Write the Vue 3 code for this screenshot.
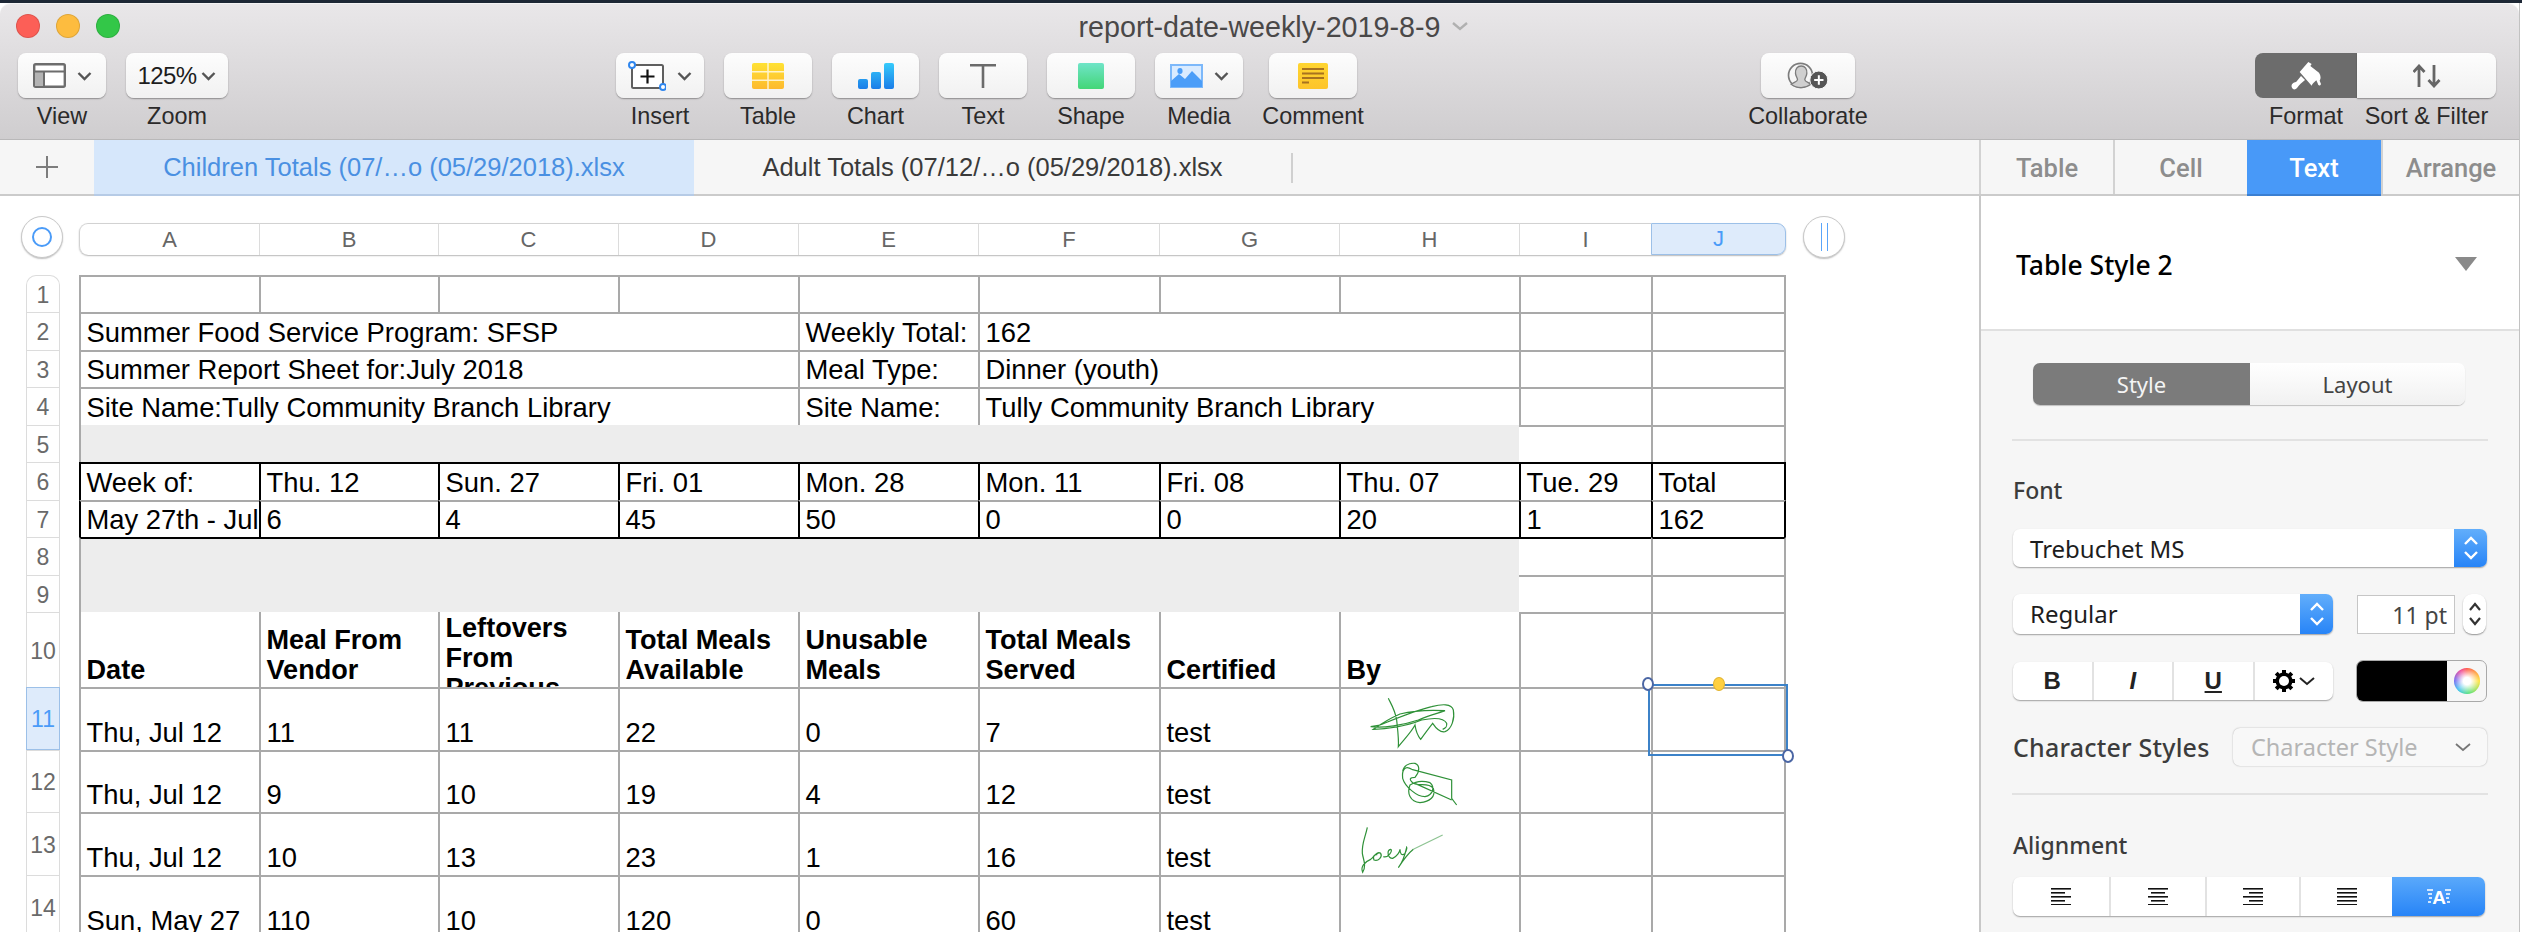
<script setup>
const letters = ['A', 'B', 'C', 'D', 'E', 'F', 'G', 'H', 'I', 'J']
const rowNums = Array.from({ length: 14 }, (_, i) => i + 1)
const cells = []
const add = (r, c, text = '', cls = '', cs = 1, rs = 1) => {
  const extra = c + cs - 1 === 10 ? ' last' : ''
  cells.push({ id: r + '-' + c, r, c, text, cls: cls + extra, cs, rs })
}
for (let c = 1; c <= 10; c++) add(1, c)
const head = [
  ['Summer Food Service Program: SFSP', 'Weekly Total:', '162'],
  ['Summer Report Sheet for:July 2018', 'Meal Type:', 'Dinner (youth)'],
  ['Site Name:Tully Community Branch Library', 'Site Name:', 'Tully Community Branch Library']
]
head.forEach((h, i) => {
  const r = i + 2
  add(r, 1, h[0], '', 4)
  add(r, 5, h[1])
  add(r, 6, h[2], '', 3)
  add(r, 9)
  add(r, 10)
})
add(5, 1, '', 'gray nt', 8)
add(5, 9, '', 'nl')
add(5, 10)
const week = ['Week of:', 'Thu. 12', 'Sun. 27', 'Fri. 01', 'Mon. 28', 'Mon. 11', 'Fri. 08', 'Thu. 07', 'Tue. 29', 'Total']
const weekVals = ['May 27th - Jul', '6', '4', '45', '50', '0', '0', '20', '1', '162']
week.forEach((t, i) => add(6, i + 1, t, 'bt bl' + (i === 9 ? ' br' : '')))
weekVals.forEach((t, i) => add(7, i + 1, t, 'bl' + (i === 9 ? ' br' : '')))
add(8, 1, '', 'gray bt', 8, 2)
add(8, 9, '', 'bt nl')
add(8, 10, '', 'bt')
add(9, 9, '', 'nl')
add(9, 10)
const hdr = ['Date', 'Meal From Vendor', 'Leftovers From Previous', 'Total Meals Available', 'Unusable Meals', 'Total Meals Served', 'Certified', 'By']
hdr.forEach((t, i) => add(10, i + 1, t, 'b nt' + (i === 2 ? ' over' : '')))
add(10, 9)
add(10, 10)
const body = [
  ['Thu, Jul 12', '11', '11', '22', '0', '7', 'test'],
  ['Thu, Jul 12', '9', '10', '19', '4', '12', 'test'],
  ['Thu, Jul 12', '10', '13', '23', '1', '16', 'test'],
  ['Sun, May 27', '110', '10', '120', '0', '60', 'test']
]
body.forEach((row, i) => {
  for (let c = 1; c <= 10; c++) add(11 + i, c, row[c - 1] || '')
})
const alignLines = [
  [[0, 20], [0, 14], [0, 20], [0, 14], [0, 20]],
  [[0, 20], [3, 14], [0, 20], [3, 14], [0, 20]],
  [[0, 20], [6, 14], [0, 20], [6, 14], [0, 20]],
  [[0, 20], [0, 20], [0, 20], [0, 20], [0, 20]]
]
</script>

<template>
  <div class="app">
    <div class="edge"></div>
    <div class="window">
      <header class="chrome">
        <div class="titlerow">
          <div class="lights">
            <span class="light red"></span>
            <span class="light yellow"></span>
            <span class="light green"></span>
          </div>
          <div class="title">
            report-date-weekly-2019-8-9
            <svg class="title-chev" width="18" height="10" viewBox="0 0 18 10"><path d="M2 2l7 6 7-6" fill="none" stroke="#b0b0b0" stroke-width="2.4"/></svg>
          </div>
          <div></div>
        </div>
        <div class="toolbar">
          <div class="tool w88">
            <div class="btn">
              <svg width="33" height="25" viewBox="0 0 33 25"><rect x="1.2" y="1.2" width="30.6" height="22.6" rx="1.5" fill="#fff" stroke="#6d6d6d" stroke-width="2.4"/><rect x="2" y="9" width="9" height="14" fill="#b4b4b4"/><path d="M1 8.5h31M11 8.5v15" stroke="#6d6d6d" stroke-width="2"/></svg>
              <svg class="chev" width="15" height="10" viewBox="0 0 15 10"><path d="M1.5 2l6 6 6-6" fill="none" stroke="#555" stroke-width="2.4"/></svg>
            </div>
            <span class="lbl">View</span>
          </div>
          <div class="tool w102">
            <div class="btn"><span class="zoomval">125%</span><svg class="chev small" width="15" height="10" viewBox="0 0 15 10"><path d="M1.5 2l6 6 6-6" fill="none" stroke="#555" stroke-width="2.4"/></svg></div>
            <span class="lbl">Zoom</span>
          </div>
          <div class="tool w88 m388">
            <div class="btn">
              <svg width="38" height="30" viewBox="0 0 38 30"><rect x="4" y="4" width="31" height="23" rx="1.5" fill="#fff" stroke="#5f5f5f" stroke-width="2"/><path d="M19.5 8.5v14M12.5 15.5h14" stroke="#111" stroke-width="2.2"/><circle cx="4" cy="4" r="3" fill="#fff" stroke="#2f86ee" stroke-width="2"/><circle cx="35" cy="26" r="3" fill="#fff" stroke="#2f86ee" stroke-width="2"/></svg>
              <svg class="chev" width="15" height="10" viewBox="0 0 15 10"><path d="M1.5 2l6 6 6-6" fill="none" stroke="#555" stroke-width="2.4"/></svg>
            </div>
            <span class="lbl">Insert</span>
          </div>
          <div class="tool w88">
            <div class="btn">
              <svg width="32" height="26" viewBox="0 0 32 26">
                <defs><linearGradient id="ty" x1="0" y1="0" x2="0" y2="1"><stop offset="0" stop-color="#ffe234"/><stop offset="1" stop-color="#fdb92e"/></linearGradient></defs>
                <rect width="32" height="26" rx="2" fill="url(#ty)"/><path d="M16 0v26M0 8.7h32M0 17.3h32" stroke="#fff" stroke-opacity=".75" stroke-width="1.5"/>
              </svg>
            </div>
            <span class="lbl">Table</span>
          </div>
          <div class="tool w87">
            <div class="btn">
              <svg width="36" height="26" viewBox="0 0 36 26">
                <defs><linearGradient id="tc" x1="0" y1="0" x2="0" y2="26" gradientUnits="userSpaceOnUse"><stop offset="0" stop-color="#36cbfb"/><stop offset="1" stop-color="#1a7de8"/></linearGradient></defs>
                <rect x="0" y="16" width="10" height="10" rx="2" fill="url(#tc)"/><rect x="13" y="9" width="10" height="17" rx="2" fill="url(#tc)"/><rect x="26" y="0" width="10" height="26" rx="2" fill="url(#tc)"/>
              </svg>
            </div>
            <span class="lbl">Chart</span>
          </div>
          <div class="tool w88">
            <div class="btn">
              <svg width="26" height="24" viewBox="0 0 26 24"><path d="M0 1.2h26M13 1v23" stroke="#6b6b6b" stroke-width="2.6"/></svg>
            </div>
            <span class="lbl">Text</span>
          </div>
          <div class="tool w88">
            <div class="btn">
              <svg width="26" height="26" viewBox="0 0 26 26">
                <defs><linearGradient id="ts" x1="0" y1="0" x2="0" y2="1"><stop offset="0" stop-color="#6fe4c8"/><stop offset="1" stop-color="#43d677"/></linearGradient></defs>
                <rect width="26" height="26" rx="2" fill="url(#ts)"/>
              </svg>
            </div>
            <span class="lbl">Shape</span>
          </div>
          <div class="tool w88">
            <div class="btn">
              <svg width="33" height="24" viewBox="0 0 33 24">
                <rect x="1" y="1" width="31" height="22" fill="#d9ebff" stroke="#7cb8fa" stroke-width="2"/>
                <path d="M1 23V17l8-7 6 5 7-8 10 10v6z" fill="#4a9df8"/><ellipse cx="10" cy="7" rx="2.6" ry="3" fill="#4a9df8"/>
              </svg>
              <svg class="chev" width="15" height="10" viewBox="0 0 15 10"><path d="M1.5 2l6 6 6-6" fill="none" stroke="#555" stroke-width="2.4"/></svg>
            </div>
            <span class="lbl">Media</span>
          </div>
          <div class="tool w88 m26">
            <div class="btn">
              <svg width="30" height="26" viewBox="0 0 30 26">
                <defs><linearGradient id="tn" x1="0" y1="0" x2="0" y2="1"><stop offset="0" stop-color="#ffd530"/><stop offset="1" stop-color="#fdc42b"/></linearGradient></defs>
                <rect width="30" height="26" rx="2" fill="url(#tn)"/><path d="M4 6h22M4 10.500h22M4 15h22M4 19.500h7" stroke="#a8721f" stroke-width="2"/>
              </svg>
            </div>
            <span class="lbl">Comment</span>
          </div>
          <div class="tool w94 m404">
            <div class="btn">
              <svg width="42" height="29" viewBox="55 35 125 87">
                <circle cx="95" cy="78" r="36" fill="#f6f6f6" stroke="#7c7c7c" stroke-width="5"/>
                <path d="M97 50c12 0 18 9 17 22-1 9-6 14-6 19 0 6 12 8 18 14-9 7-18 10-29 10s-21-3-30-10c6-6 19-8 19-14 0-5-5-10-6-19-1-13 5-22 17-22z" fill="#cfcfcf" stroke="#7c7c7c" stroke-width="4"/>
                <circle cx="150" cy="92" r="27" fill="#555" stroke="#f6f6f6" stroke-width="3"/>
                <path d="M150 78v28M136 92h28" stroke="#fff" stroke-width="6"/>
              </svg>
            </div>
            <span class="lbl">Collaborate</span>
          </div>
          <div class="tool m400 w102">
            <div class="btn seg-l on">
              <svg width="35" height="30" viewBox="60 35 105 90">
                <path d="M92 68 118 38l10 6-4 6 26 20c6 10 6 17 2 24l4 10c-3 7-8 6-10-2l-4-9c-7 6-12 11-14 16z" fill="#fff"/>
                <path d="M96 80 82 97c-10 3-16 7-14 16 3 10 12 8 16 3 7-10 14-16 24-24z" fill="#fff"/>
              </svg>
            </div>
            <span class="lbl">Format</span>
          </div>
          <div class="tool w139">
            <div class="btn seg-r">
              <svg width="28" height="24" viewBox="0 0 28 24"><path d="M6 23V2M0.500 8 6 2l5.500 6M21 1v21M15.500 16l5.500 6 5.500-6" fill="none" stroke="#666" stroke-width="2.8"/></svg>
            </div>
            <span class="lbl">Sort &amp; Filter</span>
          </div>
        </div>
      </header>

      <div class="tabstrip">
        <div class="sheets">
          <div class="add"><svg width="24" height="24" viewBox="0 0 24 24"><path d="M12 1v22M1 12h22" stroke="#7d7d7d" stroke-width="2"/></svg></div>
          <div class="sheet-tab active">Children Totals (07/…o (05/29/2018).xlsx</div>
          <div class="sheet-tab">Adult Totals (07/12/…o (05/29/2018).xlsx</div>
          <div class="sheet-sep"></div>
        </div>
        <div class="insp-tabs">
          <div class="itab">Table</div>
          <div class="itab">Cell</div>
          <div class="itab sel">Text</div>
          <div class="itab end">Arrange</div>
        </div>
      </div>

      <div class="main">
        <section class="sheet">
          <div class="colbar">
            <div class="circle-btn"><span class="ring"></span></div>
            <div class="cols">
              <div v-for="l in letters" :key="l" class="col" :class="{ csel: l === 'J' }">{{ l }}</div>
            </div>
            <div class="circle-btn"><span class="bars"></span></div>
          </div>
          <div class="gridrow">
            <div class="rows">
              <div v-for="n in rowNums" :key="n" class="rown" :class="{ rsel: n === 11 }">{{ n }}</div>
            </div>
            <div class="tablewrap">
              <div class="table">
                <div
                  v-for="c in cells"
                  :key="c.id"
                  class="cell"
                  :class="c.cls"
                  :style="{ gridColumn: c.c + ' / span ' + c.cs, gridRow: c.r + ' / span ' + c.rs }"
                ><div class="ct">{{ c.text }}</div></div>
              </div>
              <svg class="sigs" width="130" height="190" viewBox="0 0 390 570" fill="none" stroke="#2f9138" stroke-width="3.6">
                <path d="M115 25C125 45 135 60 140 90C143 120 147 150 145 170C165 145 185 125 195 105C198 125 205 140 212 148C225 130 240 110 248 100C258 115 270 128 285 125C305 118 315 85 310 60C305 40 275 42 245 50C200 60 140 85 90 105L62 110C100 115 160 105 205 90C240 75 270 68 285 62C250 60 190 62 150 72C120 85 95 100 70 118C110 118 170 108 215 90C240 85 280 80 290 100C292 112 285 115 278 118"/>
                <path d="M185 238C165 225 155 240 158 265C165 290 200 320 225 320C250 315 255 290 240 278C215 270 195 275 180 285C170 310 180 335 210 338C240 335 258 320 250 295C235 275 205 290 190 280C175 268 180 262 195 262C210 245 210 225 195 220C175 218 160 228 158 245M185 238L305 270L305 325L320 345M195 280L305 330"/>
                <path d="M52 412C45 445 35 460 37 490C40 510 50 525 38 547C30 530 45 515 62 508C72 500 82 482 92 490C98 500 85 515 72 510C68 500 72 492 82 494M100 500C115 505 130 480 122 478C110 480 112 505 128 505C140 500 150 485 150 478C150 490 155 500 165 490C170 480 172 475 170 472C165 495 155 520 145 533C160 510 175 490 190 478"/>
                <path d="M190 478L278 435" stroke-opacity=".55"/>
              </svg>
              <div class="selection">
                <span class="handle h-tl"></span>
                <span class="handle h-top"></span>
                <span class="handle h-br"></span>
              </div>
            </div>
          </div>
        </section>

        <aside class="inspector">
          <div class="style-head">
            <span class="style-name">Table Style 2</span>
            <span class="tri"></span>
          </div>
          <div class="insp-body">
            <div class="seg2">
              <div class="seg2-a">Style</div>
              <div class="seg2-b">Layout</div>
            </div>
            <div class="divider d1"></div>
            <div class="sect">Font</div>
            <div class="select full">
              <span class="seltext">Trebuchet MS</span>
              <span class="stepper"><svg width="18" height="28" viewBox="0 0 18 28"><path d="M3 10l6-6 6 6M3 18l6 6 6-6" fill="none" stroke="#fff" stroke-width="2.400"/></svg></span>
            </div>
            <div class="r2">
              <div class="select half">
                <span class="seltext">Regular</span>
                <span class="stepper"><svg width="18" height="28" viewBox="0 0 18 28"><path d="M3 10l6-6 6 6M3 18l6 6 6-6" fill="none" stroke="#fff" stroke-width="2.400"/></svg></span>
              </div>
              <div class="ptinput">11 pt</div>
              <div class="ptstep"><svg width="14" height="28" viewBox="0 0 14 28"><path d="M2 10l5-6 5 6M2 18l5 6 5-6" fill="none" stroke="#333" stroke-width="2.200"/></svg></div>
            </div>
            <div class="r3">
              <div class="biu">
                <div class="bb">B</div>
                <div class="bb it">I</div>
                <div class="bb un">U</div>
                <div class="bb gear">
                  <svg width="24" height="24" viewBox="0 0 24 24"><g stroke="#000" stroke-width="4"><path d="M12 1v22M1 12h22M4.200 4.200l15.600 15.600M19.800 4.200 4.200 19.800"/></g><circle cx="12" cy="12" r="8.500" fill="#000"/><circle cx="12" cy="12" r="5" fill="#fff"/></svg>
                  <svg width="16" height="10" viewBox="0 0 16 10"><path d="M1 2l7 6 7-6" fill="none" stroke="#222" stroke-width="2"/></svg>
                </div>
              </div>
              <div class="colorwell">
                <div class="swatch"></div>
                <div class="wheelbox"><span class="wheel"></span></div>
              </div>
            </div>
            <div class="r4">
              <span class="sect inline">Character Styles</span>
              <div class="charsel">
                <span>Character Style</span>
                <svg width="16" height="10" viewBox="0 0 16 10"><path d="M1 2l7 6 7-6" fill="none" stroke="#777" stroke-width="1.800"/></svg>
              </div>
            </div>
            <div class="divider d2"></div>
            <div class="sect s3">Alignment</div>
            <div class="alignbar">
              <div v-for="(lines, i) in alignLines" :key="i" class="ab" :class="'ab' + i">
                <svg width="20" height="17" viewBox="0 0 20 17"><rect v-for="(l, j) in lines" :key="j" :x="l[0]" :y="j * 4" :width="l[1]" height="1.600" fill="#111"/></svg>
              </div>
              <div class="ab abon">
                <svg width="24" height="18" viewBox="0 0 24 18"><path d="M0 2h6M1 6h4M2 10h3M1 14h3M18 2h6M19 6h4M19 10h3M20 14h3" stroke="#fff" stroke-width="1.600"/><text x="12" y="16" text-anchor="middle" font-family="Liberation Sans" font-weight="700" font-size="19" fill="#fff">A</text></svg>
              </div>
            </div>
          </div>
        </aside>
      </div>
    </div>
  </div>
</template>

<style>
html, body { margin: 0; background: #fff; }
</style>

<style scoped>
.app {
  width: 2522px;
  height: 932px;
  overflow: hidden;
  background: #fff;
  font-family: "Liberation Sans", Arial, sans-serif;
  display: flex;
  flex-direction: column;
}
.edge { height: 3px; background: #1d2735; flex: none; }
.window {
  width: 2520px;
  flex: 1;
  min-height: 0;
  display: flex;
  flex-direction: column;
  border-right: 1px solid #c2c2c2;
  box-sizing: border-box;
}
.chrome {
  height: 137px;
  flex: none;
  box-sizing: border-box;
  border-radius: 11px 11px 0 0;
  border-top: 1px solid #f4f3f4;
  border-bottom: 1px solid #b9b8b9;
  background: linear-gradient(#e9e7e9, #cfcdcf);
}
.titlerow {
  height: 49px;
  display: grid;
  grid-template-columns: 1fr auto 1fr;
  align-items: center;
}
.lights { display: flex; gap: 16px; padding-left: 16px; margin-top: -6px; }
.light { width: 24px; height: 24px; border-radius: 50%; box-sizing: border-box; border: 1px solid rgba(0,0,0,.12); }
.red { background: #fc5f57; }
.yellow { background: #fdbc3f; }
.green { background: #33c748; }
.title {
  position: relative;
  font-size: 28.700px;
  line-height: 34px;
  color: #4a4848;
  margin-top: -3px;
  white-space: nowrap;
}
.title-chev { position: absolute; left: calc(100% + 11px); top: 11px; }
.toolbar {
  display: flex;
  align-items: flex-start;
  gap: 20px;
  padding-left: 18px;
}
.tool { display: flex; flex-direction: column; align-items: center; flex: none; }
.w87 { width: 87px; }
.w88 { width: 88px; }
.w94 { width: 94px; }
.w102 { width: 102px; }
.w139 { width: 139px; margin-left: -20px; }
.m388 { margin-left: 368px; }
.m26 { margin-left: 6px; }
.m404 { margin-left: 384px; }
.m400 { margin-left: 380px; }
.btn {
  width: 100%;
  height: 45px;
  box-sizing: border-box;
  border-radius: 8px;
  background: linear-gradient(#fdfdfd, #f1f1f1);
  box-shadow: 0 1px 1.500px rgba(0,0,0,.35);
  display: flex;
  align-items: center;
  justify-content: center;
}
.chev { margin-left: 11px; }
.chev.small { margin-left: 5px; }
.zoomval { font-size: 24px; letter-spacing: -0.6px; color: #1d1d1d; padding-top: 1px; }
.seg-l { border-radius: 8px 0 0 8px; }
.seg-r { border-radius: 0 8px 8px 0; }
.on { background: #6c6c6c; box-shadow: none; }
.lbl {
  margin-top: 3px;
  font-size: 23.400px;
  line-height: 30px;
  color: #2b2a2a;
  white-space: nowrap;
}

.tabstrip {
  height: 56px;
  flex: none;
  display: flex;
  box-sizing: border-box;
  background: #f6f6f6;
  border-bottom: 2px solid #cbcbcb;
}
.sheets { width: 1979px; flex: none; display: flex; align-items: stretch; }
.add { width: 94px; display: flex; align-items: center; justify-content: center; }
.sheet-tab {
  width: 600px;
  display: flex;
  align-items: center;
  justify-content: center;
  font-size: 25.500px;
  color: #3a3a3a;
  white-space: nowrap;
  box-sizing: border-box;
}
.sheet-tab.active {
  background: #d6e7fb;
  color: #4a90e2;
  height: 56px;
  border-bottom: 2px solid #b6cbe6;
}
.sheet-tab + .sheet-tab { width: 597px; }
.sheet-sep { width: 2px; height: 30px; background: #d0d0d0; margin-top: 13px; }
.insp-tabs { flex: 1; display: flex; }
.itab {
  width: 134px;
  box-sizing: border-box;
  border-left: 2px solid #d2d2d2;
  padding-top: 2px;
  display: flex;
  align-items: center;
  justify-content: center;
  font-family: Roboto, "Liberation Sans", sans-serif;
  font-weight: 500;
  font-size: 25.500px;
  color: #8d8d8d;
}
.itab.end { width: auto; flex: 1; }
.itab.sel {
  background: #4899f8;
  color: #fff;
  height: 56px;
  border-left: 0;
  border-bottom: 2px solid #3a7fd2;
}

.main { flex: 1; min-height: 0; display: flex; overflow: hidden; }
.sheet { width: 1979px; flex: none; box-sizing: border-box; padding-top: 20px; overflow: hidden; background: #fff; }
.colbar { display: flex; align-items: flex-start; height: 42px; padding-left: 21px; }
.circle-btn {
  width: 42px;
  height: 42px;
  box-sizing: border-box;
  border-radius: 50%;
  border: 1px solid #c9c9c9;
  box-shadow: 0 1px 1.500px rgba(0,0,0,.25);
  background: #fff;
  display: flex;
  align-items: center;
  justify-content: center;
  flex: none;
}
.ring { width: 20px; height: 20px; box-sizing: border-box; border-radius: 50%; border: 2px solid #4a9bf8; }
.bars { width: 7px; height: 28px; box-sizing: border-box; border-left: 1.500px solid #5aa5f9; border-right: 1.500px solid #5aa5f9; }
.cols {
  margin: 7px 17px 0 16px;
  height: 32px;
  display: grid;
  grid-template-columns: 180px 179px 180px 180px 180px 181px 180px 180px 132px 135px;
  box-sizing: border-box;
  border-radius: 9px;
  box-shadow: 0 1px 1.500px rgba(0,0,0,.28);
  background: #fff;
  flex: none;
}
.col {
  box-sizing: border-box;
  border-left: 1px solid #dcdcdc;
  border-top: 1px solid #d2d2d2;
  display: flex;
  align-items: center;
  justify-content: center;
  font-size: 22px;
  color: #666;
}
.col:first-child { border-left: 1px solid #d2d2d2; border-radius: 9px 0 0 9px; }
.csel {
  background: #deebfb;
  color: #4a9bf8;
  border: 1px solid #9cc0e8;
  border-radius: 0 9px 9px 0;
}
.gridrow { display: flex; margin-top: 17px; padding-left: 26px; align-items: flex-start; }
.rows {
  width: 34px;
  flex: none;
  display: grid;
  grid-template-rows: 37px 38px 37px 38px 37px 38px 37px 38px 37px 75px 63px 62px 63px 63px;
  margin-right: 19px;
}
.rown {
  box-sizing: border-box;
  border: 1px solid #dcdcdc;
  border-bottom: 0;
  padding-top: 2px;
  display: flex;
  align-items: center;
  justify-content: center;
  font-size: 23px;
  color: #6a6a6a;
}
.rown:first-child { border-radius: 10px 10px 0 0; }
.rsel { background: #deebfb; color: #4a9bf8; border-color: #9cc0e8; border-bottom: 1px solid #9cc0e8; }
.tablewrap { position: relative; flex: none; }
.table {
  display: grid;
  grid-template-columns: 180px 179px 180px 180px 180px 181px 180px 180px 132px 135px;
  grid-template-rows: 37px 38px 37px 38px 37px 38px 37px 38px 37px 75px 63px 62px 63px 63px;
}
.cell {
  box-sizing: border-box;
  border-left: 2px solid #a9a9a9;
  border-top: 2px solid #a9a9a9;
  padding: 0 2px 2px 5.500px;
  display: flex;
  align-items: flex-end;
  overflow: hidden;
  font-size: 27.400px;
  line-height: 30px;
  color: #000;
  white-space: nowrap;
  min-width: 0;
}
.ct { min-width: 0; }
.cell.last { border-right: 2px solid #a9a9a9; padding-right: 0; }
.gray { background: #ededed; }
.nt { border-top: 0; }
.nl { border-left: 0; }
.bt { border-top-color: #000; }
.bl { border-left-color: #000; }
.cell.br { border-right-color: #000; }
.b { font-weight: 700; font-size: 27.100px; white-space: normal; }
.over { align-items: flex-start; }
.over .ct { margin-top: 1px; }
.sigs { position: absolute; left: 1271px; top: 415px; pointer-events: none; }
.selection {
  position: absolute;
  left: 1569px;
  top: 409px;
  width: 140px;
  height: 72px;
  box-sizing: border-box;
  border: 2px solid #3c82c8;
}
.handle {
  position: absolute;
  width: 12px;
  height: 14px;
  box-sizing: border-box;
  border-radius: 50%;
  background: #fff;
  border: 2px solid #4b66a4;
}
.h-tl { left: -8px; top: -9px; }
.h-top { left: 63px; top: -9px; background: #ffd040; border: 1px solid #e2b430; }
.h-br { right: -8px; bottom: -9px; }

.inspector {
  flex: 1;
  min-width: 0;
  box-sizing: border-box;
  border-left: 2px solid #c8c8c8;
  display: flex;
  flex-direction: column;
  font-family: "Noto Sans", sans-serif;
}
.style-head {
  height: 135px;
  flex: none;
  box-sizing: border-box;
  border-bottom: 2px solid #e0e0e0;
  background: #fff;
  padding: 50px 42px 0 35px;
  display: flex;
  justify-content: space-between;
  align-items: flex-start;
}
.style-name { font-size: 26.500px; font-weight: 500; color: #000; line-height: 38px; }
.tri {
  width: 0;
  height: 0;
  margin-top: 11px;
  border-left: 11px solid transparent;
  border-right: 11px solid transparent;
  border-top: 14px solid #8a8a8a;
}
.insp-body { flex: 1; background: #f6f6f6; padding: 32px 32px 0 32px; }
.seg2 {
  display: flex;
  width: 432px;
  height: 42px;
  margin-left: 20px;
  font-size: 22px;
  border-radius: 7px;
  box-shadow: 0 1px 1px rgba(0,0,0,.22);
}
.seg2-a {
  width: 217px;
  background: #7b7b7b;
  color: #f4f4f4;
  border-radius: 7px 0 0 7px;
  display: flex;
  align-items: center;
  justify-content: center;
}
.seg2-b {
  flex: 1;
  background: linear-gradient(#fff, #f1f1f1);
  color: #444;
  border-radius: 0 7px 7px 0;
  display: flex;
  align-items: center;
  justify-content: center;
}
.divider { height: 2px; background: #e2e2e2; margin-left: -1px; margin-right: -1px; }
.d1 { margin-top: 34px; }
.d2 { margin-top: 27px; }
.sect { font-size: 23px; font-weight: 500; color: #3c3c3c; line-height: 30px; margin-top: 34px; }
.sect.inline { margin: 0; font-size: 25px; font-weight: 500; letter-spacing: 0.2px; white-space: nowrap; }
.s3 { margin-top: 35px; }
.select {
  height: 38px;
  display: flex;
  align-items: stretch;
  justify-content: space-between;
  background: #fff;
  border-radius: 7px;
  box-shadow: 0 1px 1.500px rgba(0,0,0,.35);
  overflow: hidden;
  flex: none;
}
.full { margin-top: 24px; width: 474px; }
.half { width: 320px; height: 40px; }
.seltext { padding-left: 17px; font-size: 24px; line-height: 39px; color: #1d1d1d; }
.stepper {
  width: 33px;
  background: linear-gradient(#62aefb, #2784f7);
  display: flex;
  align-items: center;
  justify-content: center;
}
.r2 { margin-top: 27px; height: 40px; display: flex; align-items: center; }
.ptinput {
  width: 98px;
  height: 39px;
  margin-left: 24px;
  box-sizing: border-box;
  background: #fff;
  border: 1px solid #c6c6c6;
  text-align: right;
  padding-right: 7px;
  font-size: 23px;
  line-height: 38px;
  color: #444;
}
.ptstep {
  width: 23px;
  height: 40px;
  margin-left: 8px;
  border-radius: 9px;
  background: #fff;
  box-shadow: 0 1px 1.500px rgba(0,0,0,.4);
  display: flex;
  align-items: center;
  justify-content: center;
}
.r3 { margin-top: 26px; height: 42px; display: flex; align-items: center; gap: 23px; }
.biu {
  width: 320px;
  height: 38px;
  display: flex;
  background: #fff;
  border-radius: 7px;
  box-shadow: 0 1px 1.500px rgba(0,0,0,.35);
  flex: none;
}
.bb {
  flex: 1;
  display: flex;
  align-items: center;
  justify-content: center;
  font-family: "Liberation Sans", sans-serif;
  font-size: 24px;
  font-weight: 700;
  color: #222;
  border-left: 2px solid #e2e2e2;
}
.bb:first-child { border-left: 0; }
.it { font-style: italic; }
.un { text-decoration: underline; text-underline-offset: 2px; }
.gear { gap: 3px; }
.colorwell {
  width: 131px;
  height: 42px;
  display: flex;
  border-radius: 7px;
  overflow: hidden;
  box-sizing: border-box;
  border: 1px solid #a9a9a9;
  flex: none;
  background: #f6f6f6;
}
.swatch { width: 90px; background: #000; }
.wheelbox { flex: 1; display: flex; align-items: center; justify-content: center; }
.wheel {
  width: 26px;
  height: 26px;
  border-radius: 50%;
  background:
    radial-gradient(circle, #fff 20%, rgba(255,255,255,0) 72%),
    conic-gradient(#ff4f3c, #ffe030 90deg, #4ee070 170deg, #3ac0f0 225deg, #7060f0 275deg, #f04090 330deg, #ff4f3c);
}
.r4 { margin-top: 26px; height: 38px; display: flex; align-items: center; justify-content: space-between; }
.charsel {
  width: 254px;
  height: 38px;
  box-sizing: border-box;
  padding: 0 16px 0 18px;
  display: flex;
  align-items: center;
  justify-content: space-between;
  background: #f8f8f8;
  border-radius: 7px;
  box-shadow: 0 0 1.500px rgba(0,0,0,.35);
  font-size: 23.500px;
  color: #b5b5b5;
  white-space: nowrap;
}
.alignbar {
  margin-top: 17px;
  width: 472px;
  height: 39px;
  display: flex;
  border-radius: 7px;
  overflow: hidden;
  box-shadow: 0 1px 1.500px rgba(0,0,0,.35);
  background: #fff;
}
.ab { display: flex; align-items: center; justify-content: center; box-sizing: border-box; border-left: 2px solid #e2e2e2; flex: none; }
.ab0 { width: 96px; border-left: 0; }
.ab1 { width: 96px; }
.ab2 { width: 94px; }
.ab3 { width: 93px; }
.abon { flex: 1; background: linear-gradient(#5aa9fb, #2784f7); border-left: 0; }
</style>
